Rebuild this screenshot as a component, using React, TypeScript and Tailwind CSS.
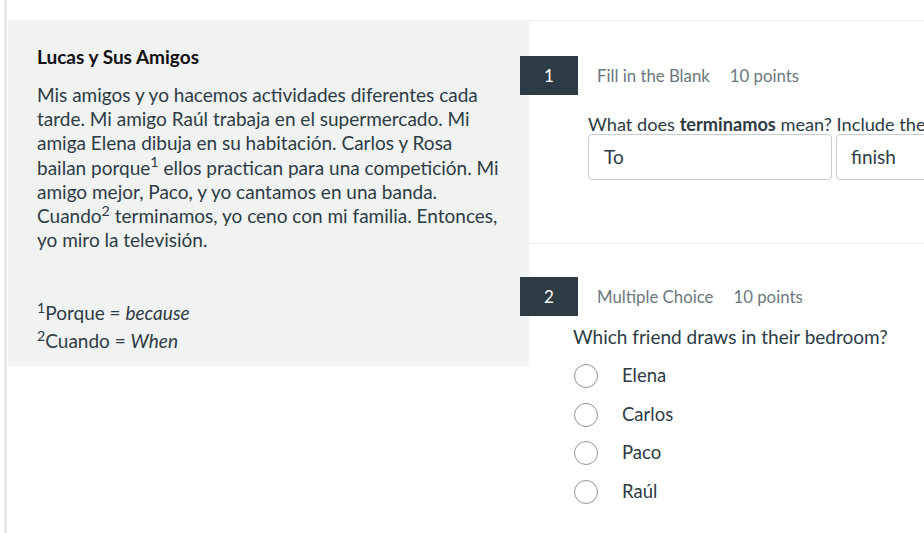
import React from "react";

const ink = "text-[#2d3b45]";

function Badge({ n }: { n: number }) {
  return (
    <div className="w-[58px] h-[39px] bg-[#2d3b45] text-white flex items-center justify-center text-[17px] -ml-[9px] shrink-0">
      {n}
    </div>
  );
}

function QuestionHeader({ n, kind }: { n: number; kind: string }) {
  return (
    <div className="flex items-center">
      <Badge n={n} />
      <span className="ml-[19px] text-[16.8px] text-[#6b7780]">{kind}</span>
      <span className="ml-[20px] text-[16.8px] text-[#6b7780]">10 points</span>
    </div>
  );
}

function Radio({ label }: { label: string }) {
  return (
    <div className="flex items-center h-[38.7px]">
      <span className="w-[24px] h-[24px] rounded-full border border-[#8b969e] bg-white shrink-0" />
      <span className={`ml-[24px] text-[18.5px] ${ink}`}>{label}</span>
    </div>
  );
}

export default function App() {
  return (
    <div
      className="w-[924px] h-[533px] bg-white flex overflow-hidden"
      style={{ fontFamily: "Lato, 'Noto Sans', sans-serif" }}
    >
      <div className="w-[8px] shrink-0 flex pl-[4px]">
        <div className="w-[3px] h-full bg-[#e8eaeb]" />
      </div>
      <div className="flex-1 pt-[20px] flex min-w-0">
        <div className="w-[521px] h-[346px] shrink-0 bg-[#f1f2f2] pl-[29px] pr-[27px] pt-[25px]">
          <h2 className="text-[19px] leading-[24px] font-bold text-[#111]">Lucas y Sus Amigos</h2>
          <p className={`mt-[14px] text-[19px] leading-[24.2px] ${ink}`}>
            Mis amigos y yo hacemos actividades diferentes cada tarde. Mi amigo Raúl trabaja en el
            supermercado. Mi amiga Elena dibuja en su habitación. Carlos y Rosa bailan porque<sup>1</sup> ellos
            practican para una competición. Mi amigo mejor, Paco, y yo cantamos en una banda. Cuando<sup>2</sup>{" "}
            terminamos, yo ceno con mi familia. Entonces, yo miro la televisión.
          </p>
          <p className={`mt-[49px] text-[19px] leading-[24px] ${ink}`}>
            <sup>1</sup>Porque = <i>because</i>
          </p>
          <p className={`mt-[4px] text-[19px] leading-[24px] ${ink}`}>
            <sup>2</sup>Cuando = <i>When</i>
          </p>
        </div>
        <div className="flex-1 min-w-0 border-t border-[#eceef0] flex flex-col">
          <div className="h-[223px] border-b border-[#eceef0] pt-[35px]">
            <QuestionHeader n={1} kind="Fill in the Blank" />
            <div className="pl-[59px] mt-[19px] overflow-hidden">
              <p className={`text-[18.2px] leading-[20px] whitespace-nowrap ${ink}`}>
                What does <b>terminamos</b> mean? Include the word "to".
              </p>
              <div className="flex gap-[4px]">
                <div className={`w-[244px] h-[46px] shrink-0 rounded-[4px] border border-[#c7cdd1] bg-white flex items-center pl-[15px] text-[19px] ${ink}`}>
                  To
                </div>
                <div className={`w-[244px] h-[46px] shrink-0 rounded-[4px] border border-[#c7cdd1] bg-white flex items-center pl-[14px] text-[19px] ${ink}`}>
                  finish
                </div>
              </div>
            </div>
          </div>
          <div className="pt-[33px]">
            <QuestionHeader n={2} kind="Multiple Choice" />
            <div className="pl-[44px] mt-[9px]">
              <p className={`text-[19px] leading-[24px] ${ink}`}>Which friend draws in their bedroom?</p>
              <div className="mt-[7.5px] pl-[1px]">
                <Radio label="Elena" />
                <Radio label="Carlos" />
                <Radio label="Paco" />
                <Radio label="Raúl" />
              </div>
            </div>
          </div>
        </div>
      </div>
    </div>
  );
}
